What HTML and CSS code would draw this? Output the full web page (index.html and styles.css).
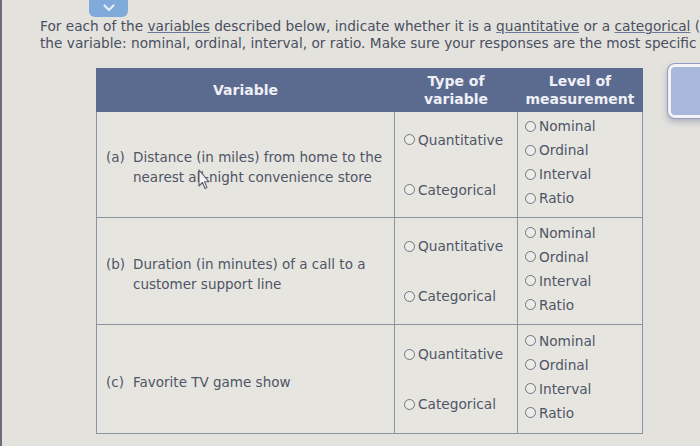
FILE: index.html
```html
<!DOCTYPE html>
<html>
<head>
<meta charset="utf-8">
<link rel="stylesheet" href="styles.css">
</head>
<body>
<div class="page">
  <div class="edge"></div>
  <div class="content">
    <div class="toprow">
      <div class="collapse"><svg width="16" height="10" viewBox="0 0 16 10"><path d="M3.5 2.5 L8 7 L12.5 2.5" fill="none" stroke="#e6eef9" stroke-width="2.2" stroke-linecap="round" stroke-linejoin="round"/></svg></div>
    </div>
    <p class="intro">For each of the <u>variables</u> described below, indicate whether it is a <u>quantitative</u> or a <u>categorical</u> (c<br>the variable: nominal, ordinal, interval, or ratio. Make sure your responses are the most specific</p>
    <div class="tablewrap">
      <table class="grid">
        <thead>
          <tr>
            <th class="c1">Variable</th>
            <th class="c2">Type of<br>variable</th>
            <th class="c3">Level of<br>measurement</th>
          </tr>
        </thead>
        <tbody>
          <tr class="ra">
            <td class="c1"><div class="var"><span class="lab">(a)</span><span class="desc">Distance (in miles) from home to the nearest all-night convenience store<svg class="cursor" width="14" height="22" viewBox="0 0 14 22"><path d="M3 1 L3 17 L6.5 13.5 L9 19.5 L11 18.6 L8.6 12.8 L13 12.8 Z" fill="#f4f4f2" stroke="#5a5e6a" stroke-width="1.1" stroke-linejoin="round"/></svg></span></div></td>
            <td class="c2"><div class="types"><div class="opt"><span class="radio"></span>Quantitative</div><div class="opt"><span class="radio"></span>Categorical</div></div></td>
            <td class="c3"><div class="levels"><div class="opt"><span class="radio"></span>Nominal</div><div class="opt"><span class="radio"></span>Ordinal</div><div class="opt"><span class="radio"></span>Interval</div><div class="opt"><span class="radio"></span>Ratio</div></div></td>
          </tr>
          <tr class="rb">
            <td class="c1"><div class="var"><span class="lab">(b)</span><span class="desc">Duration (in minutes) of a call to a customer support line</span></div></td>
            <td class="c2"><div class="types"><div class="opt"><span class="radio"></span>Quantitative</div><div class="opt"><span class="radio"></span>Categorical</div></div></td>
            <td class="c3"><div class="levels"><div class="opt"><span class="radio"></span>Nominal</div><div class="opt"><span class="radio"></span>Ordinal</div><div class="opt"><span class="radio"></span>Interval</div><div class="opt"><span class="radio"></span>Ratio</div></div></td>
          </tr>
          <tr class="rc">
            <td class="c1"><div class="var"><span class="lab">(c)</span><span class="desc">Favorite TV game show</span></div></td>
            <td class="c2"><div class="types"><div class="opt"><span class="radio"></span>Quantitative</div><div class="opt"><span class="radio"></span>Categorical</div></div></td>
            <td class="c3"><div class="levels"><div class="opt"><span class="radio"></span>Nominal</div><div class="opt"><span class="radio"></span>Ordinal</div><div class="opt"><span class="radio"></span>Interval</div><div class="opt"><span class="radio"></span>Ratio</div></div></td>
          </tr>
        </tbody>
      </table>
      <div class="sidebox"></div>
    </div>
  </div>
</div>
</body>
</html>
```
FILE: styles.css
```css
html, body {
  margin: 0;
  padding: 0;
  width: 700px;
  height: 446px;
  overflow: hidden;
  background: #e3e2dd;
}
.page {
  display: flex;
  height: 446px;
  font-family: "DejaVu Sans", Verdana, sans-serif;
  color: #4f5565;
}
.edge {
  width: 2px;
  background: #6f6b79;
  flex: none;
}
.content {
  flex: 1;
  min-width: 0;
  padding-left: 38px;
  overflow: hidden;
}
.toprow {
  height: 17px;
  padding-left: 49px;
}
.collapse {
  width: 39px;
  height: 19px;
  margin-top: -2px;
  background: #7faad9;
  border-radius: 0 0 6px 6px;
  display: flex;
  justify-content: center;
  align-items: center;
}
.intro {
  margin: 3px 0 0 0;
  font-size: 13.7px;
  line-height: 17px;
  white-space: nowrap;
  color: #4a4f61;
}
.intro u {
  text-decoration-color: #6c7899;
}
.tablewrap {
  display: flex;
  align-items: flex-start;
  margin-top: 16px;
  padding-left: 56px;
  gap: 25px;
}
.grid {
  border-collapse: collapse;
  table-layout: fixed;
  width: 543px;
  font-size: 13.5px;
  color: #4f5566;
  flex: none;
}
.grid th {
  background: #5b6a8f;
  color: #eef0f6;
  font-weight: bold;
  font-size: 14px;
  line-height: 18px;
  height: 42px;
  padding: 0;
  border: 1px solid #5b6a8f;
  text-align: center;
}
.grid td {
  border: 1px solid #8c93a3;
  padding: 0;
  vertical-align: middle;
  background: #e6e5e0;
}
.c1 { width: 297px; }
.c2 { width: 122px; }
.c3 { width: 124px; }
.ra td { height: 105px; }
.rb td { height: 106px; }
.rc td { height: 108px; }
.var {
  display: flex;
  padding: 5px 8px 0 9px;
  line-height: 20px;
}
.lab {
  flex: none;
  width: 27px;
}
.desc {
  position: relative;
}
.cursor {
  position: absolute;
  left: 63px;
  top: 22px;
}
.types {
  display: flex;
  flex-direction: column;
  gap: 32px;
  padding-left: 9px;
}
.levels {
  display: flex;
  flex-direction: column;
  gap: 6px;
  padding: 0 0 5px 7px;
}
.opt {
  display: flex;
  align-items: center;
  height: 18px;
  font-size: 13.7px;
  color: #4f5566;
}
.radio {
  display: inline-block;
  width: 9px;
  height: 9px;
  border: 1.2px solid #6e7484;
  border-radius: 50%;
  margin-right: 3px;
  background: #ecebe7;
  flex: none;
}
.sidebox {
  width: 56px;
  height: 48px;
  margin-top: -4px;
  background: #a9b7dc;
  border: 3px solid #f4f4f6;
  border-radius: 7px;
  box-shadow: 0 0 0 1px #8f9bc0, -1px 4px 6px rgba(80,90,140,0.35);
  flex: none;
}
```
